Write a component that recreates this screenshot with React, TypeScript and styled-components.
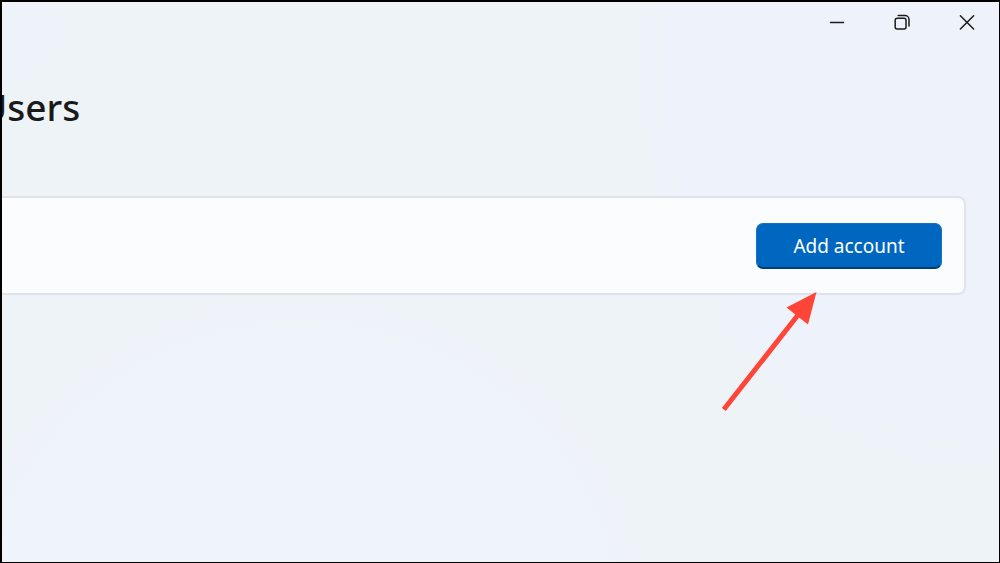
import React from "react";
import styled, { createGlobalStyle } from "styled-components";

const GlobalStyle = createGlobalStyle`
  *, *::before, *::after {
    box-sizing: border-box;
  }

  body {
    margin: 0;
    background: #eef3f8;
    color: #1a1a1a;
    font-family: "Noto Sans", "Open Sans", sans-serif;
  }
`;

const Window = styled.div`
  display: flex;
  flex-direction: column;
  min-height: 100vh;
  overflow: hidden;
  border: solid #000;
  border-width: 2px 1px 1px 2px;
  background:
    radial-gradient(ellipse 34% 60% at 30% 114%, #eff3fb 90%, transparent 108%),
    radial-gradient(ellipse 36% 72% at 100% 12%, #eef3fb 92%, transparent 104%),
    radial-gradient(ellipse 8% 20% at 0% 0%, #eef3fa 50%, transparent 100%),
    #eef3f7;
`;

const TitleBar = styled.header`
  display: flex;
  justify-content: flex-end;
`;

const CaptionButton = styled.button`
  display: flex;
  align-items: center;
  justify-content: center;
  width: 65px;
  height: 40px;
  padding: 0;
  border: 0;
  background: transparent;
  color: #1c1c1c;
`;

const CaptionIcon = styled.svg`
  width: 16px;
  height: 16px;
  fill: none;
  stroke: currentColor;
  stroke-width: 1.5;
  stroke-linecap: round;
`;

const Content = styled.main`
  padding: 40px 33px 40px 0;
`;

const Heading = styled.h1`
  margin: 0 0 64px -22px;
  font-size: 37px;
  font-weight: 500;
  line-height: 50px;
`;

const Card = styled.section`
  display: flex;
  justify-content: flex-end;
  padding: 25px 22px 24px;
  border: 2px solid #dee4e9;
  border-left: 0;
  border-radius: 0 8px 8px 0;
  background: #fbfcfe;
`;

const Action = styled.div`
  position: relative;
`;

const PrimaryButton = styled.button`
  display: block;
  width: 186px;
  height: 46px;
  padding: 1px 0 0;
  border: 1px solid #1473c5;
  border-bottom: 2px solid #003e73;
  border-radius: 7px;
  background: #0067c0;
  color: #fff;
  font-family: inherit;
  font-size: 19px;
  line-height: 28px;
`;

const Arrow = styled.svg`
  position: absolute;
  top: 67px;
  right: 124px;
  width: 96px;
  height: 122px;
  pointer-events: none;
`;

export default function App() {
  return (
    <>
      <GlobalStyle />
      <Window>
        <TitleBar>
          <CaptionButton type="button" aria-label="Minimize">
            <CaptionIcon viewBox="0 0 16 16">
              <path d="M1.5 8.5h13" />
            </CaptionIcon>
          </CaptionButton>
          <CaptionButton type="button" aria-label="Restore">
            <CaptionIcon viewBox="0 0 16 16">
              <rect x="1.2" y="4.2" width="10.8" height="10.8" rx="2" />
              <path d="M4.2 1.5h6.8a4 4 0 0 1 4 4v6.6" />
            </CaptionIcon>
          </CaptionButton>
          <CaptionButton type="button" aria-label="Close">
            <CaptionIcon viewBox="0 0 16 16">
              <path d="M1.4 1.8l13.2 13.2M14.6 1.8L1.4 15" />
            </CaptionIcon>
          </CaptionButton>
        </TitleBar>
        <Content>
          <Heading>Users</Heading>
          <Card>
            <Action>
              <PrimaryButton type="button">Add account</PrimaryButton>
              <Arrow viewBox="0 0 96 122" aria-hidden="true">
                <path d="M1.8 119.5L76 25" stroke="#ff4438" strokeWidth="5" />
                <path d="M94.5 2L64.5 17.5L86 34.5Z" fill="#ff4438" />
              </Arrow>
            </Action>
          </Card>
        </Content>
      </Window>
    </>
  );
}
